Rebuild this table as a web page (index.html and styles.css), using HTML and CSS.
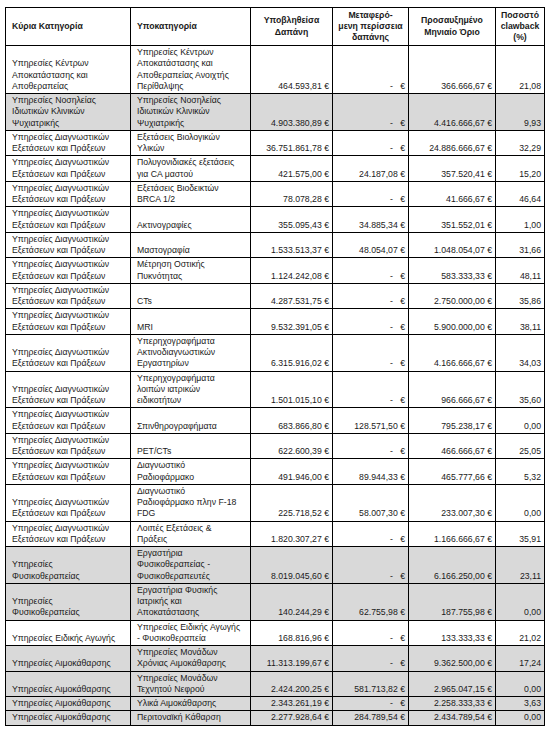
FILE: index.html
```html
<!DOCTYPE html>
<html lang="el">
<head>
  <meta charset="UTF-8">
  <meta name="viewport" content="width=device-width, initial-scale=1.0">
  <title>Clawback</title>
  <link rel="stylesheet" href="styles.css">
</head>
<body>
  <table class="sheet">
    <colgroup>
      <col class="c-main">
      <col class="c-sub">
      <col class="c-cost">
      <col class="c-carry">
      <col class="c-limit">
      <col class="c-pct">
    </colgroup>
    <tr class="head">
      <th class="left">Κύρια Κατηγορία</th>
      <th class="left">Υποκατηγορία</th>
      <th>Υποβληθείσα<br>Δαπάνη</th>
      <th>Μεταφερό-<br>μενη περίσσεια<br>δαπάνης</th>
      <th>Προσαυξημένο<br>Μηνιαίο Όριο</th>
      <th>Ποσοστό<br>clawback<br>(%)</th>
    </tr>
    <tr>
      <td>Υπηρεσίες Κέντρων<br>Αποκατάστασης και<br>Αποθεραπείας</td>
      <td>Υπηρεσίες Κέντρων<br>Αποκατάστασης και<br>Αποθεραπείας Ανοιχτής<br>Περίθαλψης</td>
      <td class="num">464.593,81 €</td>
      <td class="num">-&nbsp;&nbsp;&nbsp;€</td>
      <td class="num">366.666,67 €</td>
      <td class="num">21,08</td>
    </tr>
    <tr class="grey">
      <td>Υπηρεσίες Νοσηλείας<br>Ιδιωτικών Κλινικών<br>Ψυχιατρικής</td>
      <td>Υπηρεσίες Νοσηλείας<br>Ιδιωτικών Κλινικών<br>Ψυχιατρικής</td>
      <td class="num">4.903.380,89 €</td>
      <td class="num">-&nbsp;&nbsp;&nbsp;€</td>
      <td class="num">4.416.666,67 €</td>
      <td class="num">9,93</td>
    </tr>
    <tr>
      <td>Υπηρεσίες Διαγνωστικών<br>Εξετάσεων και Πράξεων</td>
      <td>Εξετάσεις Βιολογικών<br>Υλικών</td>
      <td class="num">36.751.861,78 €</td>
      <td class="num">-&nbsp;&nbsp;&nbsp;€</td>
      <td class="num">24.886.666,67 €</td>
      <td class="num">32,29</td>
    </tr>
    <tr>
      <td>Υπηρεσίες Διαγνωστικών<br>Εξετάσεων και Πράξεων</td>
      <td>Πολυγονιδιακές εξετάσεις<br>για CA μαστού</td>
      <td class="num">421.575,00 €</td>
      <td class="num">24.187,08 €</td>
      <td class="num">357.520,41 €</td>
      <td class="num">15,20</td>
    </tr>
    <tr>
      <td>Υπηρεσίες Διαγνωστικών<br>Εξετάσεων και Πράξεων</td>
      <td>Εξετάσεις Βιοδεικτών<br>BRCA 1/2</td>
      <td class="num">78.078,28 €</td>
      <td class="num">-&nbsp;&nbsp;&nbsp;€</td>
      <td class="num">41.666,67 €</td>
      <td class="num">46,64</td>
    </tr>
    <tr>
      <td>Υπηρεσίες Διαγνωστικών<br>Εξετάσεων και Πράξεων</td>
      <td>Ακτινογραφίες</td>
      <td class="num">355.095,43 €</td>
      <td class="num">34.885,34 €</td>
      <td class="num">351.552,01 €</td>
      <td class="num">1,00</td>
    </tr>
    <tr>
      <td>Υπηρεσίες Διαγνωστικών<br>Εξετάσεων και Πράξεων</td>
      <td>Μαστογραφία</td>
      <td class="num">1.533.513,37 €</td>
      <td class="num">48.054,07 €</td>
      <td class="num">1.048.054,07 €</td>
      <td class="num">31,66</td>
    </tr>
    <tr>
      <td>Υπηρεσίες Διαγνωστικών<br>Εξετάσεων και Πράξεων</td>
      <td>Μέτρηση Οστικής<br>Πυκνότητας</td>
      <td class="num">1.124.242,08 €</td>
      <td class="num">-&nbsp;&nbsp;&nbsp;€</td>
      <td class="num">583.333,33 €</td>
      <td class="num">48,11</td>
    </tr>
    <tr>
      <td>Υπηρεσίες Διαγνωστικών<br>Εξετάσεων και Πράξεων</td>
      <td>CTs</td>
      <td class="num">4.287.531,75 €</td>
      <td class="num">-&nbsp;&nbsp;&nbsp;€</td>
      <td class="num">2.750.000,00 €</td>
      <td class="num">35,86</td>
    </tr>
    <tr>
      <td>Υπηρεσίες Διαγνωστικών<br>Εξετάσεων και Πράξεων</td>
      <td>MRI</td>
      <td class="num">9.532.391,05 €</td>
      <td class="num">-&nbsp;&nbsp;&nbsp;€</td>
      <td class="num">5.900.000,00 €</td>
      <td class="num">38,11</td>
    </tr>
    <tr>
      <td>Υπηρεσίες Διαγνωστικών<br>Εξετάσεων και Πράξεων</td>
      <td>Υπερηχογραφήματα<br>Ακτινοδιαγνωστικών<br>Εργαστηρίων</td>
      <td class="num">6.315.916,02 €</td>
      <td class="num">-&nbsp;&nbsp;&nbsp;€</td>
      <td class="num">4.166.666,67 €</td>
      <td class="num">34,03</td>
    </tr>
    <tr>
      <td>Υπηρεσίες Διαγνωστικών<br>Εξετάσεων και Πράξεων</td>
      <td>Υπερηχογραφήματα<br>λοιπών ιατρικών<br>ειδικοτήτων</td>
      <td class="num">1.501.015,10 €</td>
      <td class="num">-&nbsp;&nbsp;&nbsp;€</td>
      <td class="num">966.666,67 €</td>
      <td class="num">35,60</td>
    </tr>
    <tr>
      <td>Υπηρεσίες Διαγνωστικών<br>Εξετάσεων και Πράξεων</td>
      <td>Σπινθηρογραφήματα</td>
      <td class="num">683.866,80 €</td>
      <td class="num">128.571,50 €</td>
      <td class="num">795.238,17 €</td>
      <td class="num">0,00</td>
    </tr>
    <tr>
      <td>Υπηρεσίες Διαγνωστικών<br>Εξετάσεων και Πράξεων</td>
      <td>PET/CTs</td>
      <td class="num">622.600,39 €</td>
      <td class="num">-&nbsp;&nbsp;&nbsp;€</td>
      <td class="num">466.666,67 €</td>
      <td class="num">25,05</td>
    </tr>
    <tr>
      <td>Υπηρεσίες Διαγνωστικών<br>Εξετάσεων και Πράξεων</td>
      <td>Διαγνωστικό<br>Ραδιοφάρμακο</td>
      <td class="num">491.946,00 €</td>
      <td class="num">89.944,33 €</td>
      <td class="num">465.777,66 €</td>
      <td class="num">5,32</td>
    </tr>
    <tr>
      <td>Υπηρεσίες Διαγνωστικών<br>Εξετάσεων και Πράξεων</td>
      <td>Διαγνωστικό<br>Ραδιοφάρμακο πλην F-18<br>FDG</td>
      <td class="num">225.718,52 €</td>
      <td class="num">58.007,30 €</td>
      <td class="num">233.007,30 €</td>
      <td class="num">0,00</td>
    </tr>
    <tr>
      <td>Υπηρεσίες Διαγνωστικών<br>Εξετάσεων και Πράξεων</td>
      <td>Λοιπές Εξετάσεις &amp;<br>Πράξεις</td>
      <td class="num">1.820.307,27 €</td>
      <td class="num">-&nbsp;&nbsp;&nbsp;€</td>
      <td class="num">1.166.666,67 €</td>
      <td class="num">35,91</td>
    </tr>
    <tr class="grey">
      <td>Υπηρεσίες<br>Φυσικοθεραπείας</td>
      <td>Εργαστήρια<br>Φυσικοθεραπείας -<br>Φυσικοθεραπευτές</td>
      <td class="num">8.019.045,60 €</td>
      <td class="num">-&nbsp;&nbsp;&nbsp;€</td>
      <td class="num">6.166.250,00 €</td>
      <td class="num">23,11</td>
    </tr>
    <tr class="grey">
      <td>Υπηρεσίες<br>Φυσικοθεραπείας</td>
      <td>Εργαστήρια Φυσικής<br>Ιατρικής και<br>Αποκατάστασης</td>
      <td class="num">140.244,29 €</td>
      <td class="num">62.755,98 €</td>
      <td class="num">187.755,98 €</td>
      <td class="num">0,00</td>
    </tr>
    <tr>
      <td>Υπηρεσίες Ειδικής Αγωγής</td>
      <td>Υπηρεσίες Ειδικής Αγωγής<br>- Φυσικοθεραπεία</td>
      <td class="num">168.816,96 €</td>
      <td class="num">-&nbsp;&nbsp;&nbsp;€</td>
      <td class="num">133.333,33 €</td>
      <td class="num">21,02</td>
    </tr>
    <tr class="grey">
      <td>Υπηρεσίες Αιμοκάθαρσης</td>
      <td>Υπηρεσίες Μονάδων<br>Χρόνιας Αιμοκάθαρσης</td>
      <td class="num">11.313.199,67 €</td>
      <td class="num">-&nbsp;&nbsp;&nbsp;€</td>
      <td class="num">9.362.500,00 €</td>
      <td class="num">17,24</td>
    </tr>
    <tr class="grey">
      <td>Υπηρεσίες Αιμοκάθαρσης</td>
      <td>Υπηρεσίες Μονάδων<br>Τεχνητού Νεφρού</td>
      <td class="num">2.424.200,25 €</td>
      <td class="num">581.713,82 €</td>
      <td class="num">2.965.047,15 €</td>
      <td class="num">0,00</td>
    </tr>
    <tr class="grey">
      <td>Υπηρεσίες Αιμοκάθαρσης</td>
      <td>Υλικά Αιμοκάθαρσης</td>
      <td class="num">2.343.261,19 €</td>
      <td class="num">-&nbsp;&nbsp;&nbsp;€</td>
      <td class="num">2.258.333,33 €</td>
      <td class="num">3,63</td>
    </tr>
    <tr class="grey">
      <td>Υπηρεσίες Αιμοκάθαρσης</td>
      <td>Περιτοναϊκή Κάθαρση</td>
      <td class="num">2.277.928,64 €</td>
      <td class="num">284.789,54 €</td>
      <td class="num">2.434.789,54 €</td>
      <td class="num">0,00</td>
    </tr>
  </table>
</body>
</html>
```

FILE: styles.css
```css
/* Page */
body {
  margin: 0;
  padding: 7px 0 0 5px;
  background-color: #fff;
  font-family: "Liberation Sans", Arial, sans-serif;
  font-size: 8.7px;
  color: #1a1a1a;
}

/* Sheet table */
.sheet {
  border-collapse: collapse;
  table-layout: fixed;
  width: 539px;
}

.c-main { width: 125px; }
.c-sub { width: 120px; }
.c-cost { width: 82px; }
.c-carry { width: 76px; }
.c-limit { width: 87px; }
.c-pct { width: 49px; }

th, td {
  border: 1px solid #000;
  padding: 1px 3px 1px 6px;
  line-height: 11.25px;
  vertical-align: bottom;
  text-align: left;
  white-space: nowrap;
  overflow: hidden;
}

.head th {
  height: 35px;
  vertical-align: middle;
  text-align: center;
  font-weight: bold;
  padding: 1px 2px;
}

.head th.left {
  text-align: left;
  padding-left: 6px;
}

td.num {
  text-align: right;
  padding-right: 3px;
}

/* Shaded rows */
.grey td {
  background-color: #d9d9d9;
}
```
